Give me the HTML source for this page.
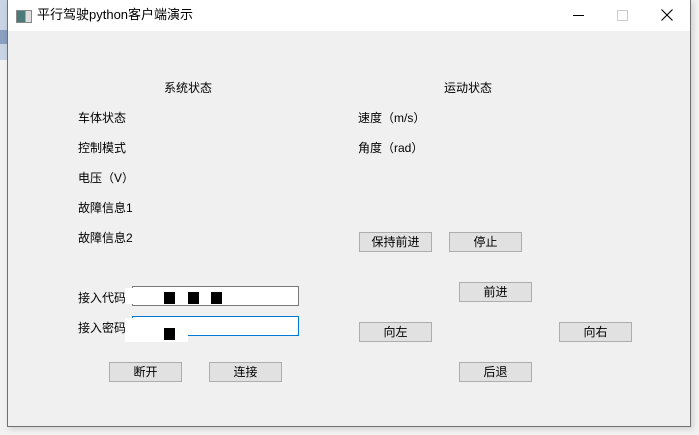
<!DOCTYPE html>
<html><head><meta charset="utf-8"><style>
body{margin:0;width:699px;height:435px;position:relative;overflow:hidden;background:#f2f2f2;font-family:"Liberation Sans","Noto Sans CJK SC",sans-serif;font-size:12px;color:#000}
.a{position:absolute}
.win{left:7px;top:0;width:684px;height:427px;border:1px solid #707070;border-top:none;background:#f0f0f0;box-sizing:border-box;box-shadow:2px 2px 6px rgba(0,0,0,0.15)}
.tb{left:8px;top:0;width:682px;height:31px;background:#fff}
.btn{position:absolute;width:73px;height:20px;background:#e1e1e1;border:1px solid #adadad;box-sizing:border-box;text-align:center;line-height:18px;font-size:12px}
.in{position:absolute;width:167px;height:20px;background:#fff;border:1px solid #7a7a7a;box-sizing:border-box}
.l{position:absolute;font-size:12px;line-height:14px}
.blk{position:absolute;width:11px;height:12px;background:#000}
</style></head><body>
<div class="a" style="left:0;top:0;width:7px;height:60px;background:#c8d4e4"></div>
<div class="a" style="left:0;top:30px;width:7px;height:14px;background:#8aa0c0"></div>
<div class="a win"></div>
<div class="a tb"></div>
<div class="a" style="left:16px;top:10px;width:14px;height:11px;border:1px solid #888;background:linear-gradient(90deg,#4a7a7a 60%,#ddd 60%)"></div>
<div class="a" style="left:37px;top:7px;font-size:13px;line-height:16px">平行驾驶python客户端演示</div>
<div class="a" style="left:573px;top:15px;width:11px;height:1px;background:#000"></div>
<div class="a" style="left:617px;top:10px;width:9px;height:9px;border:1px solid #ccc"></div>
<svg class="a" style="left:661px;top:9px" width="12" height="12"><path d="M0.5 0.5L11.5 11.5M11.5 0.5L0.5 11.5" stroke="#000" stroke-width="1.1"/></svg>

<div class="l" style="left:164px;top:81px">系统状态</div>
<div class="l" style="left:444px;top:81px">运动状态</div>
<div class="l" style="left:78px;top:111px">车体状态</div>
<div class="l" style="left:78px;top:141px">控制模式</div>
<div class="l" style="left:78px;top:171px">电压（V）</div>
<div class="l" style="left:78px;top:201px">故障信息1</div>
<div class="l" style="left:78px;top:231px">故障信息2</div>
<div class="l" style="left:358px;top:111px">速度（m/s）</div>
<div class="l" style="left:358px;top:141px">角度（rad）</div>

<div class="l" style="left:78px;top:291px">接入代码</div>
<div class="l" style="left:78px;top:321px">接入密码</div>
<div class="in" style="left:132px;top:286px"></div>
<div class="in" style="left:132px;top:316px;border-color:#0078d7"></div>
<div class="a" style="left:125px;top:288px;width:107px;height:16px;background:#fff"></div>
<div class="a" style="left:125px;top:318px;width:63px;height:24px;background:#fff"></div>
<div class="blk" style="left:164px;top:292px"></div>
<div class="blk" style="left:188px;top:292px"></div>
<div class="blk" style="left:211px;top:292px"></div>
<div class="blk" style="left:164px;top:328px"></div>

<div class="btn" style="left:109px;top:362px">断开</div>
<div class="btn" style="left:209px;top:362px">连接</div>
<div class="btn" style="left:359px;top:232px">保持前进</div>
<div class="btn" style="left:449px;top:232px">停止</div>
<div class="btn" style="left:459px;top:282px">前进</div>
<div class="btn" style="left:359px;top:322px">向左</div>
<div class="btn" style="left:559px;top:322px">向右</div>
<div class="btn" style="left:459px;top:362px">后退</div>
</body></html>
